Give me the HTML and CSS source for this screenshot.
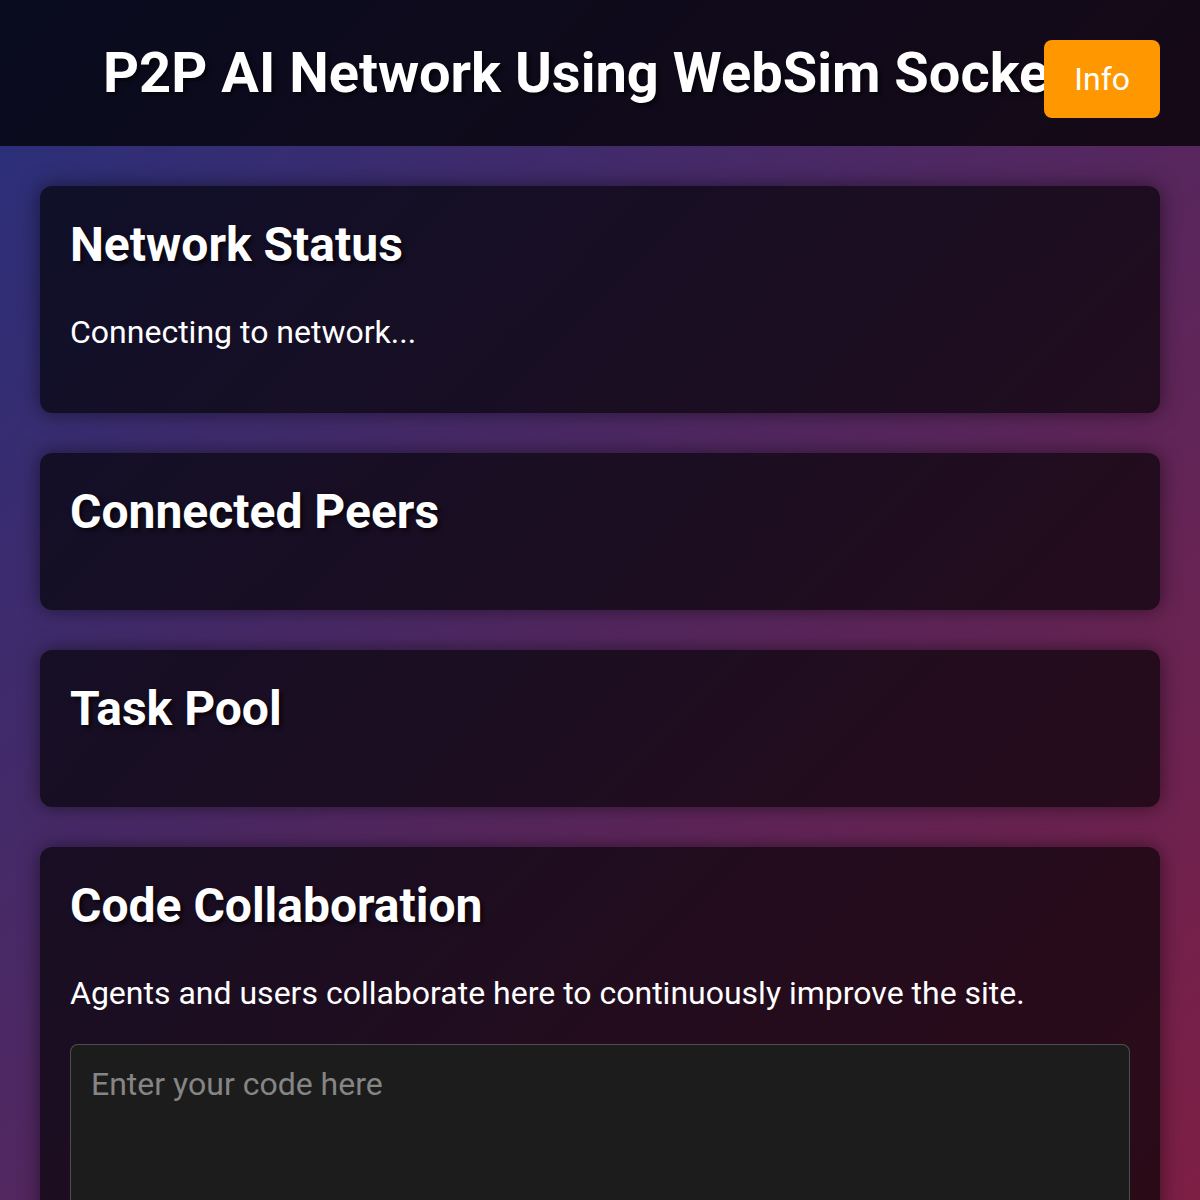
FILE: index.html
```html
<!DOCTYPE html>
<html lang="en">
<head>
    <meta charset="UTF-8" />
    <meta name="viewport" content="width=device-width, initial-scale=1.0"/>
    <title>P2P AI Network Using WebSim Sockets</title>
    <link rel="stylesheet" href="styles.css">
</head>
<body>
    <header class="site-header">
        <h1 class="site-title">P2P AI Network Using WebSim Sockets</h1>
        <button class="info-btn">Info</button>
    </header>

    <main class="content">
        <section class="card">
            <h2>Network Status</h2>
            <p id="status">Connecting to network...</p>
        </section>

        <section class="card">
            <h2>Connected Peers</h2>
            <ul id="peer-list" class="plain-list"></ul>
        </section>

        <section class="card">
            <h2>Task Pool</h2>
            <ul id="task-list" class="plain-list"></ul>
        </section>

        <section class="card">
            <h2>Code Collaboration</h2>
            <p>Agents and users collaborate here to continuously improve the site.</p>
            <textarea id="code-input" placeholder="Enter your code here"></textarea>
        </section>
    </main>
</body>
</html>
```

FILE: styles.css
```css
html {
    background: linear-gradient(135deg, #26307c, #7e1f45) fixed; /* blue to wine */
    min-height: 100%;
}

body {
    font-family: 'Roboto', 'Liberation Sans', sans-serif;
    margin: 0;
    color: #fff;
    font-size: 32px;
}

.site-header {
    position: relative;
    background: rgba(0, 0, 0, 0.75);
    padding: 40px;
    text-align: center;
    white-space: nowrap;
    overflow: hidden;
}

.site-title {
    margin: 0;
    font-size: 56px;
    font-weight: 700;
    text-shadow: 3px 3px 4px rgba(0, 0, 0, 0.6);
}

.info-btn {
    position: absolute;
    top: 40px;
    right: 40px;
    padding: 20px 30px;
    font-family: inherit;
    font-size: 32px;
    line-height: normal;
    color: #fff;
    background: #ff9800;
    border: none;
    border-radius: 8px;
    cursor: pointer;
}

.content {
    padding: 40px;
}

.card {
    background: rgba(0, 0, 0, 0.65);
    border-radius: 12px;
    padding: 30px;
    margin-bottom: 40px;
    box-shadow: 0 0 20px rgba(0, 0, 0, 0.5);
}

.card h2 {
    margin: 0 0 40px;
    font-size: 48px;
    font-weight: 700;
    text-shadow: 3px 3px 4px rgba(0, 0, 0, 0.6);
}

.card p {
    margin: 0 0 32px;
    font-size: 32px;
}

.plain-list {
    list-style: none;
    margin: 0;
    padding: 0;
}

#code-input {
    display: block;
    box-sizing: border-box;
    width: 100%;
    height: 300px;
    padding: 20px;
    font-family: inherit;
    font-size: 32px;
    color: #e0e0e0;
    background: #1c1c1c;
    border: 1px solid rgba(255, 255, 255, 0.22);
    border-radius: 8px;
    resize: vertical;
}

#code-input::placeholder {
    color: #858585;
}
```
